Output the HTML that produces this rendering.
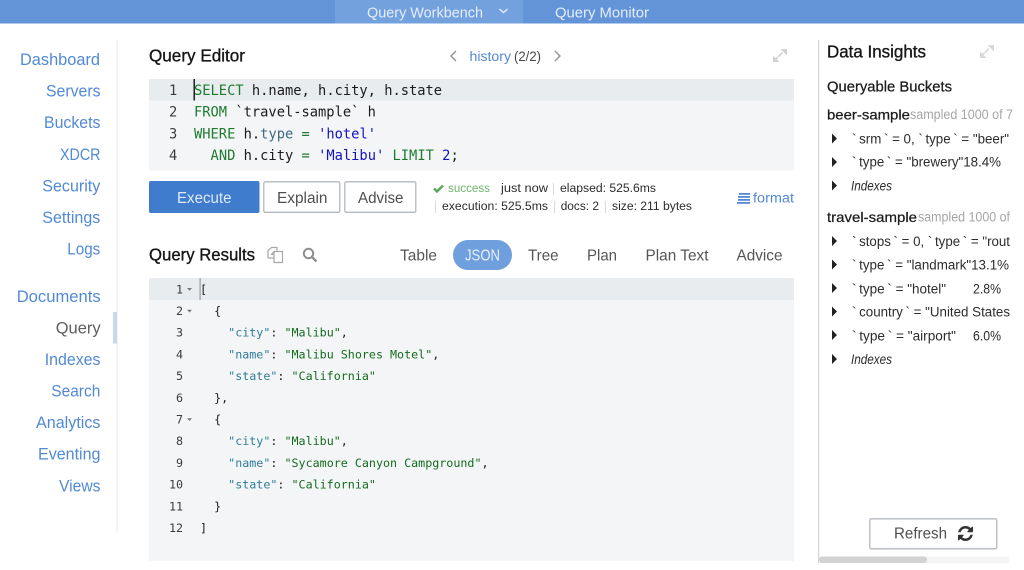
<!DOCTYPE html>
<html><head><meta charset="utf-8"><title>Query Workbench</title>
<style>
html,body{margin:0;padding:0;background:#fff;width:1024px;height:570px;overflow:hidden}
svg{display:block;filter:blur(.3px)}
text{font-family:"Liberation Sans",sans-serif;white-space:pre}
.nav{font-size:17px;fill:#5289d6}
.h{font-size:17.3px;fill:#161616;stroke:#161616;stroke-width:.35}
.tab{font-size:16px;fill:#555}
.m{font-family:"DejaVu Sans Mono",monospace;font-size:13.74px;fill:#1c1c1c}
.r{font-family:"DejaVu Sans Mono",monospace;font-size:11.7px;fill:#1c1c1c}
.n{fill:#3c3c3c}
.k{fill:#1d7a30}.s{fill:#1313c0}.t{fill:#42697e}
.jk{fill:#2f7d97}.js{fill:#146b1f}
.st{font-size:12.4px;fill:#2c2c2c}
.sep{fill:#d8d8d8}
.b{font-size:13.4px;fill:#2c2c2c}
.g{font-size:13.4px;fill:#a6a6a6}
</style></head><body>
<svg width="1024" height="570" viewBox="0 0 1024 570" xmlns="http://www.w3.org/2000/svg">
<rect width="1024" height="570" fill="#fff"/>
<!-- top bar -->
<rect width="1024" height="23.5" fill="#6294d7"/>
<rect x="335" width="188" height="23.5" fill="#73a1de"/>
<text x="367" y="17.3" font-size="14.6" fill="#e4edf9" textLength="116" lengthAdjust="spacingAndGlyphs">Query Workbench</text>
<path d="M499.5 9l4 3.6 4-3.6" fill="none" stroke="#e4edf9" stroke-width="1.4"/>
<text x="555" y="17.3" font-size="14.6" fill="#e4edf9" textLength="94" lengthAdjust="spacingAndGlyphs">Query Monitor</text>
<!-- left nav -->
<rect x="116.5" y="40" width="1.2" height="493" fill="#efefef"/>
<rect x="113" y="312" width="4" height="31.5" fill="#c6d8ee"/>
<text class="nav" x="20" y="65" textLength="80" lengthAdjust="spacingAndGlyphs">Dashboard</text>
<text class="nav" x="46" y="96.500" textLength="54.500" lengthAdjust="spacingAndGlyphs">Servers</text>
<text class="nav" x="44" y="128.200" textLength="56.500" lengthAdjust="spacingAndGlyphs">Buckets</text>
<text class="nav" x="60" y="159.800" textLength="40.500" lengthAdjust="spacingAndGlyphs">XDCR</text>
<text class="nav" x="42.300" y="191.300" textLength="58" lengthAdjust="spacingAndGlyphs">Security</text>
<text class="nav" x="42.300" y="223" textLength="58" lengthAdjust="spacingAndGlyphs">Settings</text>
<text class="nav" x="67.300" y="254.500" textLength="33" lengthAdjust="spacingAndGlyphs">Logs</text>
<text class="nav" x="16.700" y="301.800" textLength="84" lengthAdjust="spacingAndGlyphs">Documents</text>
<text class="nav" style="fill:#5f5f5f" x="55.700" y="333.400" textLength="45" lengthAdjust="spacingAndGlyphs">Query</text>
<text class="nav" x="44.700" y="365" textLength="55.800" lengthAdjust="spacingAndGlyphs">Indexes</text>
<text class="nav" x="51.300" y="396.500" textLength="49" lengthAdjust="spacingAndGlyphs">Search</text>
<text class="nav" x="36" y="428.100" textLength="64.500" lengthAdjust="spacingAndGlyphs">Analytics</text>
<text class="nav" x="38" y="459.700" textLength="62.500" lengthAdjust="spacingAndGlyphs">Eventing</text>
<text class="nav" x="59" y="491.300" textLength="41.500" lengthAdjust="spacingAndGlyphs">Views</text>
<!-- query editor -->
<text class="h" x="149" y="61.500" textLength="96" lengthAdjust="spacingAndGlyphs">Query Editor</text>
<path d="M456 51l-5 5 5 5" fill="none" stroke="#8a8f96" stroke-width="1.300"/>
<text x="469.500" y="61" font-size="13.400" fill="#5289d6" textLength="41.500" lengthAdjust="spacingAndGlyphs">history</text>
<text x="514" y="61" font-size="13.400" fill="#4a4a4a" textLength="27" lengthAdjust="spacingAndGlyphs">(2/2)</text>
<path d="M555 51l5 5-5 5" fill="none" stroke="#8a8f96" stroke-width="1.300"/>
<path d="M778.500 56.500l4-4M775 60l3-3" fill="none" stroke="#d2d2d2" stroke-width="1.600"/>
<path d="M780.500 49h6.500v6.500zM773 55.500l6.500 6.500h-6.500z" fill="#d2d2d2"/>
<rect x="149" y="79" width="645" height="91.500" fill="#f4f5f7"/>
<rect x="149" y="79" width="645" height="21.500" fill="#e9ecef"/>
<rect x="193.500" y="79" width="1.400" height="21.500" fill="#111"/>
<text class="m n" x="169" y="95">1</text>
<text class="m n" x="169" y="116.700">2</text>
<text class="m n" x="169" y="138.400">3</text>
<text class="m n" x="169" y="160">4</text>
<text class="m" x="194" y="95"><tspan class="k">SELECT</tspan> h.name, h.city, h.state</text>
<text class="m" x="194" y="116.700"><tspan class="k">FROM</tspan> `travel-sample` h</text>
<text class="m" x="194" y="138.400"><tspan class="k">WHERE</tspan> h.<tspan class="t">type</tspan> <tspan class="k">=</tspan> <tspan class="s">'hotel'</tspan></text>
<text class="m" x="194" y="160">  <tspan class="k">AND</tspan> h.city <tspan class="k">=</tspan> <tspan class="s">'Malibu'</tspan> <tspan class="k">LIMIT</tspan> <tspan class="s">2</tspan>;</text>
<!-- buttons -->
<rect x="149" y="181" width="110.500" height="32" rx="2" fill="#3f7ccd"/>
<text x="177" y="203" font-size="15.500" fill="#dfe9f7" textLength="54.500" lengthAdjust="spacingAndGlyphs">Execute</text>
<rect x="263.800" y="181.800" width="76" height="30.500" rx="1.500" fill="#fff" stroke="#b4b9bf" stroke-width="1.300"/>
<text x="277" y="203" font-size="15.500" fill="#4f4f4f" textLength="50.500" lengthAdjust="spacingAndGlyphs">Explain</text>
<rect x="344.800" y="181.800" width="71" height="30.500" rx="1.500" fill="#fff" stroke="#b4b9bf" stroke-width="1.300"/>
<text x="358" y="203" font-size="15.500" fill="#4f4f4f" textLength="45.500" lengthAdjust="spacingAndGlyphs">Advise</text>
<!-- status -->
<path d="M434 188.500l3 3 6-6" fill="none" stroke="#5aa85a" stroke-width="2.400"/>
<text x="448" y="192" font-size="12.400" fill="#6cb56c" textLength="42" lengthAdjust="spacingAndGlyphs">success</text>
<text class="st" x="501" y="192" textLength="47" lengthAdjust="spacingAndGlyphs">just now</text>
<rect class="sep" x="553" y="183" width="1" height="12"/>
<text class="st" x="560" y="192" textLength="96" lengthAdjust="spacingAndGlyphs">elapsed: 525.6ms</text>
<rect class="sep" x="435" y="201" width="1" height="12"/>
<text class="st" x="442" y="210" textLength="106" lengthAdjust="spacingAndGlyphs">execution: 525.5ms</text>
<rect class="sep" x="554" y="201" width="1" height="12"/>
<text class="st" x="560.700" y="210" textLength="38.300" lengthAdjust="spacingAndGlyphs">docs: 2</text>
<rect class="sep" x="605" y="201" width="1" height="12"/>
<text class="st" x="612" y="210" textLength="80" lengthAdjust="spacingAndGlyphs">size: 211 bytes</text>
<g fill="#5289d6"><rect x="739" y="193" width="11" height="1.800"/><rect x="738" y="196" width="12" height="1.800"/><rect x="738" y="199" width="12" height="1.800"/><rect x="737" y="202" width="13" height="1.800"/></g>
<text x="753" y="202.700" font-size="13.400" fill="#5289d6" textLength="41" lengthAdjust="spacingAndGlyphs">format</text>
<!-- results header -->
<text class="h" x="149" y="260.700" textLength="106" lengthAdjust="spacingAndGlyphs">Query Results</text>
<g fill="none" stroke="#a8a8a8" stroke-width="1.200"><path d="M268 258v-7.500l3.500-3h5.500v4"/><path d="M274 251.500h8.500v11h-8.500z" fill="#fff"/><path d="M268 258h6M274 251.500l-2.500 3h2.500"/></g>
<circle cx="308.500" cy="253.500" r="4.700" fill="none" stroke="#8e8e8e" stroke-width="2"/>
<path d="M312 257l4.500 4.500" stroke="#8e8e8e" stroke-width="2.400" fill="none"/>
<text class="tab" x="400" y="260.500" textLength="37" lengthAdjust="spacingAndGlyphs">Table</text>
<rect x="453" y="240" width="59" height="30" rx="15" fill="#6f9fdc"/>
<text class="tab" style="fill:#e8f0fa" x="465" y="260.500" textLength="35" lengthAdjust="spacingAndGlyphs">JSON</text>
<text class="tab" x="528" y="260.500" textLength="30.500" lengthAdjust="spacingAndGlyphs">Tree</text>
<text class="tab" x="587" y="260.500" textLength="30" lengthAdjust="spacingAndGlyphs">Plan</text>
<text class="tab" x="645.500" y="260.500" textLength="63" lengthAdjust="spacingAndGlyphs">Plan Text</text>
<text class="tab" x="736.500" y="260.500" textLength="46" lengthAdjust="spacingAndGlyphs">Advice</text>
<!-- results -->
<rect x="149" y="278" width="645" height="283" fill="#f4f5f7"/>
<rect x="149" y="278" width="645" height="22" fill="#e9ecef"/>
<rect x="199.500" y="278" width="1.200" height="22" fill="#9a9da1"/>
<text class="r n" x="176" y="293.300">1</text>
<text class="r n" x="176" y="315">2</text>
<text class="r n" x="176" y="336.700">3</text>
<text class="r n" x="176" y="358.400">4</text>
<text class="r n" x="176" y="380.100">5</text>
<text class="r n" x="176" y="401.800">6</text>
<text class="r n" x="176" y="423.500">7</text>
<text class="r n" x="176" y="445.200">8</text>
<text class="r n" x="176" y="466.900">9</text>
<text class="r n" x="169" y="488.600">10</text>
<text class="r n" x="169" y="510.300">11</text>
<text class="r n" x="169" y="532">12</text>
<path d="M187 288h5l-2.500 2.800zM187 309.700h5l-2.500 2.800zM187 418.200h5l-2.500 2.800z" fill="#777"/>
<text class="r" x="200" y="293.300">[</text>
<text class="r" x="200" y="315">  {</text>
<text class="r" x="200" y="336.700">    <tspan class="jk">"city"</tspan>: <tspan class="js">"Malibu"</tspan>,</text>
<text class="r" x="200" y="358.400">    <tspan class="jk">"name"</tspan>: <tspan class="js">"Malibu Shores Motel"</tspan>,</text>
<text class="r" x="200" y="380.100">    <tspan class="jk">"state"</tspan>: <tspan class="js">"California"</tspan></text>
<text class="r" x="200" y="401.800">  },</text>
<text class="r" x="200" y="423.500">  {</text>
<text class="r" x="200" y="445.200">    <tspan class="jk">"city"</tspan>: <tspan class="js">"Malibu"</tspan>,</text>
<text class="r" x="200" y="466.900">    <tspan class="jk">"name"</tspan>: <tspan class="js">"Sycamore Canyon Campground"</tspan>,</text>
<text class="r" x="200" y="488.600">    <tspan class="jk">"state"</tspan>: <tspan class="js">"California"</tspan></text>
<text class="r" x="200" y="510.300">  }</text>
<text class="r" x="200" y="532">]</text>
<!-- data insights -->
<rect x="818" y="40" width="1.200" height="523" fill="#d4d6d9"/>
<text class="h" x="827" y="57.500" textLength="99" lengthAdjust="spacingAndGlyphs">Data Insights</text>
<path d="M985 52.500l4-4M981.500 56l3-3" stroke="#d8d8d8" stroke-width="1.600" fill="none"/>
<path d="M987.500 45h6.500v6.500zM980 51.500l6.500 6.500h-6.500z" fill="#d8d8d8"/>
<text x="827" y="91.700" font-size="14.500" fill="#1c1c1c" stroke="#1c1c1c" stroke-width=".25" textLength="125" lengthAdjust="spacingAndGlyphs">Queryable Buckets</text>
<svg x="827" y="100" width="183" height="280" viewBox="827 100 183 280">
<text x="827" y="119.300" font-size="14" fill="#1c1c1c" stroke="#1c1c1c" stroke-width=".25" textLength="83" lengthAdjust="spacingAndGlyphs">beer-sample</text>
<text class="g" x="910" y="119" textLength="103" lengthAdjust="spacingAndGlyphs">sampled 1000 of 7</text>
<text class="b" x="852" y="143.300" textLength="157" lengthAdjust="spacingAndGlyphs">`&#8201;srm&#8201;` = 0, `&#8201;type&#8201;` = "beer"</text>
<text class="b" x="852" y="166.700" textLength="149" lengthAdjust="spacingAndGlyphs">`&#8201;type&#8201;` = "brewery"18.4%</text>
<text class="b" style="font-style:italic" x="851" y="190.700" textLength="41" lengthAdjust="spacingAndGlyphs">Indexes</text>
<text x="827" y="222" font-size="14" fill="#1c1c1c" stroke="#1c1c1c" stroke-width=".25" textLength="90" lengthAdjust="spacingAndGlyphs">travel-sample</text>
<text class="g" x="918" y="221.500" textLength="92" lengthAdjust="spacingAndGlyphs">sampled 1000 of</text>
<text class="b" x="852" y="246" textLength="158" lengthAdjust="spacingAndGlyphs">`&#8201;stops&#8201;` = 0, `&#8201;type&#8201;` = "rout</text>
<text class="b" x="852" y="269.700" textLength="157" lengthAdjust="spacingAndGlyphs">`&#8201;type&#8201;` = "landmark"13.1%</text>
<text class="b" x="852" y="293.300" textLength="94" lengthAdjust="spacingAndGlyphs">`&#8201;type&#8201;` = "hotel"</text>
<text class="b" x="973" y="293.300" textLength="28" lengthAdjust="spacingAndGlyphs">2.8%</text>
<text class="b" x="852" y="316.700" textLength="158" lengthAdjust="spacingAndGlyphs">`&#8201;country&#8201;` = "United States</text>
<text class="b" x="852" y="340.300" textLength="104" lengthAdjust="spacingAndGlyphs">`&#8201;type&#8201;` = "airport"</text>
<text class="b" x="973" y="340.300" textLength="28" lengthAdjust="spacingAndGlyphs">6.0%</text>
<text class="b" style="font-style:italic" x="851" y="364" textLength="41" lengthAdjust="spacingAndGlyphs">Indexes</text>
</svg>
<path d="M832 133.500l5 5-5 5zM832 157l5 5-5 5zM832 180.500l5 5-5 5zM832 236l5 5-5 5zM832 259.500l5 5-5 5zM832 283l5 5-5 5zM832 306.500l5 5-5 5zM832 330l5 5-5 5zM832 354l5 5-5 5z" fill="#222"/>
<!-- refresh -->
<rect x="869.800" y="518.800" width="127" height="30" rx="1.500" fill="#fff" stroke="#b4b9bf" stroke-width="1.300"/>
<text x="894" y="538.300" font-size="15.500" fill="#4f4f4f" textLength="53" lengthAdjust="spacingAndGlyphs">Refresh</text>
<svg x="958" y="526" width="15" height="15" viewBox="128 128 1536 1536"><path fill="#333" d="M1639 1056q0 5-1 7-64 268-268 434.500t-478 166.500q-146 0-282.500-55t-243.500-157l-129 129q-19 19-45 19t-45-19-19-45v-448q0-26 19-45t45-19h448q26 0 45 19t19 45-19 45l-137 137q71 66 161 102t187 36q134 0 250-65t186-179q11-17 53-117 8-23 30-23h192q13 0 22.500 9.500t9.500 22.500zm25-800v448q0 26-19 45t-45 19h-448q-26 0-45-19t-19-45 19-45l138-138q-148-137-349-137-134 0-250 65t-186 179q-11 17-53 117-8 23-30 23h-199q-13 0-22.500-9.500t-9.500-22.500v-7q65-268 270-434.500t480-166.500q146 0 284 55.500t245 156.500l130-129q19-19 45-19t45 19 19 45z"/></svg>
<!-- scrollbar -->
<rect x="819" y="556.500" width="190" height="6.500" rx="2" fill="#f4f4f4"/>
<rect x="819" y="556.500" width="108" height="6.500" rx="3" fill="#d2d2d2"/>
</svg>
</body></html>
